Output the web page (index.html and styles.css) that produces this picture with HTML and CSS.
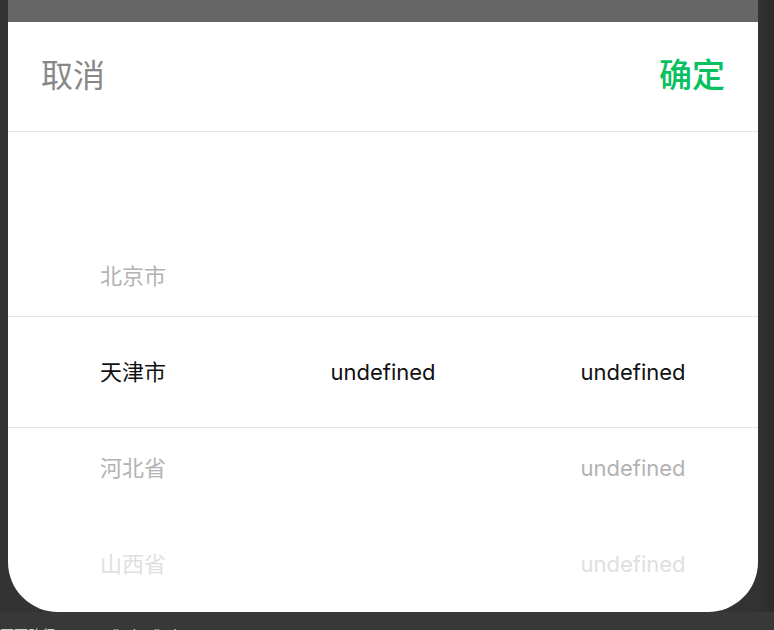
FILE: index.html
```html
<!DOCTYPE html>
<html lang="zh-CN">
<head>
    <meta charset="UTF-8">
    <meta name="viewport" content="width=device-width, initial-scale=1.0">
    <title>选择地区</title>
    <link rel="stylesheet" href="styles.css">
</head>
<body>
    <div class="screen">
        <div class="stage">
            <div class="mask-top"></div>
            <div class="sheet">
                <div class="sheet-header">
                    <span class="btn-cancel">取消</span>
                    <span class="btn-confirm">确定</span>
                </div>
                <div class="picker">
                    <div class="picker-indicator"></div>
                    <div class="picker-column cn">
                        <div class="picker-item"></div>
                        <div class="picker-item near">北京市</div>
                        <div class="picker-item active">天津市</div>
                        <div class="picker-item near">河北省</div>
                        <div class="picker-item far">山西省</div>
                    </div>
                    <div class="picker-column">
                        <div class="picker-item"></div>
                        <div class="picker-item"></div>
                        <div class="picker-item active">undefined</div>
                        <div class="picker-item"></div>
                        <div class="picker-item"></div>
                    </div>
                    <div class="picker-column">
                        <div class="picker-item"></div>
                        <div class="picker-item"></div>
                        <div class="picker-item active">undefined</div>
                        <div class="picker-item near">undefined</div>
                        <div class="picker-item far">undefined</div>
                    </div>
                </div>
            </div>
        </div>
        <div class="status-bar">
            <span class="status-text">页面路径：pages/index/index</span>
        </div>
    </div>
</body>
</html>
```

FILE: styles.css
```css
body {
    margin: 0;
    padding: 0;
    background-color: #333;
    font-family: 'Inter', 'Noto Sans CJK SC', sans-serif;
    overflow: hidden;
}

.screen {
    width: 774px;
    height: 630px;
    display: flex;
    flex-direction: column;
}

.stage {
    height: 612px;
    padding-left: 8px;
    display: flex;
    flex-direction: column;
    background: linear-gradient(to left, #2b2b2b 0, #333 16px);
}

.mask-top {
    width: 750px;
    height: 22px;
    background-color: #666;
}

.sheet {
    width: 750px;
    height: 590px;
    background-color: #fff;
    border-radius: 0 0 50px 50px;
    overflow: hidden;
    display: flex;
    flex-direction: column;
}

.sheet-header {
    height: 110px;
    box-sizing: border-box;
    display: flex;
    align-items: center;
    justify-content: space-between;
    padding: 0 33px 7px 33px;
    border-bottom: 1px solid #e5e5e5;
    font-family: 'Noto Sans CJK SC', sans-serif;
    font-size: 32px;
}

.btn-cancel {
    color: #888;
}

.btn-confirm {
    color: #07c160;
    font-weight: 500;
    font-size: 33px;
}

.picker {
    position: relative;
    flex: 1;
    display: grid;
    grid-template-columns: repeat(3, 1fr);
}

.picker-indicator {
    position: absolute;
    left: 0;
    right: 0;
    top: 184px;
    height: 110px;
    border-top: 1px solid #e5e5e5;
    border-bottom: 1px solid #e5e5e5;
    pointer-events: none;
}

.picker-column {
    display: flex;
    flex-direction: column;
}

.picker-item {
    height: 96px;
    box-sizing: border-box;
    display: flex;
    align-items: center;
    justify-content: center;
    font-size: 22px;
    color: #000;
}

/* CJK glyphs sit a little low, nudge them back to the row centre */
.picker-column.cn .picker-item {
    padding-bottom: 4px;
}

.picker-item.active {
    color: #111;
}

.picker-item.near {
    color: #b3b3b3;
}

.picker-item.far {
    color: #e0e0e0;
}

.status-bar {
    height: 18px;
    background-color: #383838;
    overflow: hidden;
}

.status-text {
    display: block;
    margin-top: 12px;
    font-size: 14px;
    color: #ccc;
}
```
